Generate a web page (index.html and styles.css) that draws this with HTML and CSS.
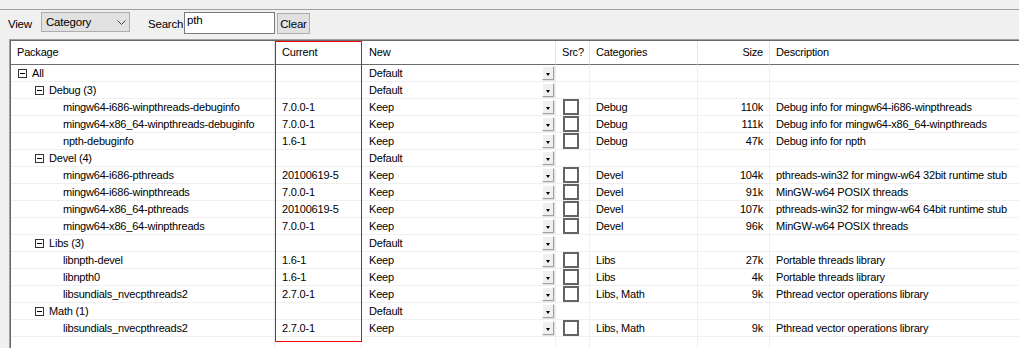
FILE: index.html
```html
<!DOCTYPE html>
<html lang="en">
<head>
    <meta charset="UTF-8">
    <title>Select Packages</title>
    <link rel="stylesheet" href="styles.css">
</head>
<body>

<div class="top-strip"></div>

<div class="toolbar">
    <span class="lbl view-lbl">View</span>
    <div class="select">
        <span>Category</span>
        <svg class="chevron" width="9" height="5" viewBox="0 0 9 5"><path d="M0.5 0.5 L4.5 4.5 L8.5 0.5" fill="none" stroke="#444" stroke-width="1"/></svg>
    </div>
    <span class="lbl search-lbl">Search</span>
    <input class="search" type="text" value="pth">
    <button class="btn">Clear</button>
</div>

<div class="list">
<div class="list-inner">

    <div class="row head">
        <div class="cell">Package</div>
        <div class="cell pad7">Current</div>
        <div class="cell pad7">New</div>
        <div class="cell">Src?</div>
        <div class="cell">Categories</div>
        <div class="cell size">Size</div>
        <div class="cell">Description</div>
    </div>

    <div class="row">
        <div class="cell tree lvl0"><span class="exp"></span>All</div>
        <div class="cell pad7"></div>
        <div class="cell pad7 pick"><span>Default</span><span class="drop"></span></div>
        <div class="cell"></div>
        <div class="cell"></div>
        <div class="cell size"></div>
        <div class="cell"></div>
    </div>

    <div class="row">
        <div class="cell tree lvl1"><span class="exp"></span>Debug (3)</div>
        <div class="cell pad7"></div>
        <div class="cell pad7 pick"><span>Default</span><span class="drop"></span></div>
        <div class="cell"></div>
        <div class="cell"></div>
        <div class="cell size"></div>
        <div class="cell"></div>
    </div>
    <div class="row">
        <div class="cell pkg">mingw64-i686-winpthreads-debuginfo</div>
        <div class="cell pad7">7.0.0-1</div>
        <div class="cell pad7 pick"><span>Keep</span><span class="drop"></span></div>
        <div class="cell src"><span class="check"></span></div>
        <div class="cell">Debug</div>
        <div class="cell size">110k</div>
        <div class="cell">Debug info for mingw64-i686-winpthreads</div>
    </div>
    <div class="row">
        <div class="cell pkg">mingw64-x86_64-winpthreads-debuginfo</div>
        <div class="cell pad7">7.0.0-1</div>
        <div class="cell pad7 pick"><span>Keep</span><span class="drop"></span></div>
        <div class="cell src"><span class="check"></span></div>
        <div class="cell">Debug</div>
        <div class="cell size">111k</div>
        <div class="cell">Debug info for mingw64-x86_64-winpthreads</div>
    </div>
    <div class="row">
        <div class="cell pkg">npth-debuginfo</div>
        <div class="cell pad7">1.6-1</div>
        <div class="cell pad7 pick"><span>Keep</span><span class="drop"></span></div>
        <div class="cell src"><span class="check"></span></div>
        <div class="cell">Debug</div>
        <div class="cell size">47k</div>
        <div class="cell">Debug info for npth</div>
    </div>

    <div class="row">
        <div class="cell tree lvl1"><span class="exp"></span>Devel (4)</div>
        <div class="cell pad7"></div>
        <div class="cell pad7 pick"><span>Default</span><span class="drop"></span></div>
        <div class="cell"></div>
        <div class="cell"></div>
        <div class="cell size"></div>
        <div class="cell"></div>
    </div>
    <div class="row">
        <div class="cell pkg">mingw64-i686-pthreads</div>
        <div class="cell pad7">20100619-5</div>
        <div class="cell pad7 pick"><span>Keep</span><span class="drop"></span></div>
        <div class="cell src"><span class="check"></span></div>
        <div class="cell">Devel</div>
        <div class="cell size">104k</div>
        <div class="cell">pthreads-win32 for mingw-w64 32bit runtime stub</div>
    </div>
    <div class="row">
        <div class="cell pkg">mingw64-i686-winpthreads</div>
        <div class="cell pad7">7.0.0-1</div>
        <div class="cell pad7 pick"><span>Keep</span><span class="drop"></span></div>
        <div class="cell src"><span class="check"></span></div>
        <div class="cell">Devel</div>
        <div class="cell size">91k</div>
        <div class="cell">MinGW-w64 POSIX threads</div>
    </div>
    <div class="row">
        <div class="cell pkg">mingw64-x86_64-pthreads</div>
        <div class="cell pad7">20100619-5</div>
        <div class="cell pad7 pick"><span>Keep</span><span class="drop"></span></div>
        <div class="cell src"><span class="check"></span></div>
        <div class="cell">Devel</div>
        <div class="cell size">107k</div>
        <div class="cell">pthreads-win32 for mingw-w64 64bit runtime stub</div>
    </div>
    <div class="row">
        <div class="cell pkg">mingw64-x86_64-winpthreads</div>
        <div class="cell pad7">7.0.0-1</div>
        <div class="cell pad7 pick"><span>Keep</span><span class="drop"></span></div>
        <div class="cell src"><span class="check"></span></div>
        <div class="cell">Devel</div>
        <div class="cell size">96k</div>
        <div class="cell">MinGW-w64 POSIX threads</div>
    </div>

    <div class="row">
        <div class="cell tree lvl1"><span class="exp"></span>Libs (3)</div>
        <div class="cell pad7"></div>
        <div class="cell pad7 pick"><span>Default</span><span class="drop"></span></div>
        <div class="cell"></div>
        <div class="cell"></div>
        <div class="cell size"></div>
        <div class="cell"></div>
    </div>
    <div class="row">
        <div class="cell pkg">libnpth-devel</div>
        <div class="cell pad7">1.6-1</div>
        <div class="cell pad7 pick"><span>Keep</span><span class="drop"></span></div>
        <div class="cell src"><span class="check"></span></div>
        <div class="cell">Libs</div>
        <div class="cell size">27k</div>
        <div class="cell">Portable threads library</div>
    </div>
    <div class="row">
        <div class="cell pkg">libnpth0</div>
        <div class="cell pad7">1.6-1</div>
        <div class="cell pad7 pick"><span>Keep</span><span class="drop"></span></div>
        <div class="cell src"><span class="check"></span></div>
        <div class="cell">Libs</div>
        <div class="cell size">4k</div>
        <div class="cell">Portable threads library</div>
    </div>
    <div class="row">
        <div class="cell pkg">libsundials_nvecpthreads2</div>
        <div class="cell pad7">2.7.0-1</div>
        <div class="cell pad7 pick"><span>Keep</span><span class="drop"></span></div>
        <div class="cell src"><span class="check"></span></div>
        <div class="cell">Libs, Math</div>
        <div class="cell size">9k</div>
        <div class="cell">Pthread vector operations library</div>
    </div>

    <div class="row">
        <div class="cell tree lvl1"><span class="exp"></span>Math (1)</div>
        <div class="cell pad7"></div>
        <div class="cell pad7 pick"><span>Default</span><span class="drop"></span></div>
        <div class="cell"></div>
        <div class="cell"></div>
        <div class="cell size"></div>
        <div class="cell"></div>
    </div>
    <div class="row">
        <div class="cell pkg">libsundials_nvecpthreads2</div>
        <div class="cell pad7">2.7.0-1</div>
        <div class="cell pad7 pick"><span>Keep</span><span class="drop"></span></div>
        <div class="cell src"><span class="check"></span></div>
        <div class="cell">Libs, Math</div>
        <div class="cell size">9k</div>
        <div class="cell">Pthread vector operations library</div>
    </div>

    <div class="row filler">
        <div class="cell"></div>
        <div class="cell"></div>
        <div class="cell"></div>
        <div class="cell"></div>
        <div class="cell"></div>
        <div class="cell"></div>
        <div class="cell"></div>
    </div>

    <div class="highlight"></div>
</div>
</div>

</body>
</html>
```

FILE: styles.css
```css
html, body {
    margin: 0;
    overflow: hidden;
}

body {
    font-family: "Liberation Sans", Arial, sans-serif;
    font-size: 11px;
    letter-spacing: -0.2px;
    color: #000;
    background-color: #f0f0f0;
    height: 348px;
}

.top-strip {
    height: 9px;
    border-bottom: 1px solid #a0a0a0;
}

/* toolbar */

.toolbar {
    display: flex;
    align-items: flex-start;
    height: 29px;
    padding-top: 2px;
    box-sizing: border-box;
    font-size: 11.5px;
}

.lbl {
    line-height: 22px;
    height: 22px;
    margin-top: 1px;
}

.view-lbl {
    width: 33px;
    padding-left: 8px;
}

.select {
    display: flex;
    align-items: center;
    justify-content: space-between;
    box-sizing: border-box;
    width: 89px;
    height: 20px;
    padding: 0 3px 0 4px;
    background-color: #e1e1e1;
    border: 1px solid #adadad;
}

.search-lbl {
    width: 36px;
    margin-left: 18px;
    white-space: nowrap;
}

.search {
    box-sizing: border-box;
    width: 91px;
    height: 22px;
    margin: 0;
    padding: 0 0 6px 2px;
    border: 1px solid #7a7a7a;
    background-color: #fff;
    font-family: inherit;
    font-size: 11.5px;
    letter-spacing: -0.2px;
    outline: none;
}

.btn {
    box-sizing: border-box;
    width: 33px;
    height: 21px;
    margin: 1px 0 0 2px;
    padding: 0;
    background-color: #e1e1e1;
    border: 1px solid #adadad;
    font-family: inherit;
    font-size: 11.5px;
    letter-spacing: -0.2px;
    color: #000;
}

/* package list */

.list {
    width: 1100px;
    margin-left: 9px;
    border-top: 1px solid #a0a0a0;
    border-left: 1px solid #a0a0a0;
}

.list-inner {
    position: relative;
    background-color: #fff;
    border-top: 1px solid #696969;
    border-left: 1px solid #696969;
}

.row {
    display: grid;
    grid-template-columns: 264px 87px 194px 34px 108px 72px 340px;
    height: 17px;
}

.cell {
    box-sizing: border-box;
    height: 17px;
    line-height: 16px;
    padding-left: 6px;
    border-right: 1px solid #f0f0f0;
    border-bottom: 1px solid #f0f0f0;
    white-space: nowrap;
    overflow: hidden;
}

.head {
    height: 24px;
}

.head .cell {
    height: 24px;
    line-height: 23px;
    border-right-color: #e5e5e5;
    border-bottom: 1px solid #6d6d6d;
}

.pad7 {
    padding-left: 7px;
}

.size {
    text-align: right;
    padding-left: 0;
    padding-right: 6px;
}

.pkg {
    padding-left: 52px;
}

/* tree expanders */

.tree {
    display: flex;
    align-items: center;
}

.lvl0 {
    padding-left: 7px;
}

.lvl1 {
    padding-left: 24px;
}

.exp {
    position: relative;
    box-sizing: border-box;
    width: 9px;
    height: 9px;
    margin-right: 5px;
    border: 1px solid #333;
}

.exp::after {
    content: "";
    position: absolute;
    left: 1px;
    top: 3px;
    width: 5px;
    height: 1px;
    background-color: #000;
}

/* "New" column combo */

.pick {
    display: flex;
    justify-content: space-between;
    padding-right: 1px;
}

.drop {
    position: relative;
    box-sizing: border-box;
    width: 12px;
    height: 14px;
    margin-top: 1px;
    background-color: #f0f0f0;
    border-top: 1px solid #fff;
    border-left: 1px solid #fff;
    border-right: 1px solid #a0a0a0;
    border-bottom: 1px solid #a0a0a0;
    box-shadow: 1px 1px 0 #e3e3e3;
}

.drop::after {
    content: "";
    position: absolute;
    left: 3px;
    top: 6px;
    border-left: 2.5px solid transparent;
    border-right: 2.5px solid transparent;
    border-top: 3px solid #000;
}

.src {
    padding-left: 7px;
}

.check {
    display: block;
    box-sizing: border-box;
    width: 16px;
    height: 16px;
    border: 2px solid #646464;
    background-color: #fff;
}

.filler,
.filler .cell {
    height: 30px;
    border-bottom: none;
}

.highlight {
    position: absolute;
    left: 264px;
    top: 0;
    width: 87px;
    height: 301px;
    box-sizing: border-box;
    border: 1px solid red;
    forced-color-adjust: none;
    pointer-events: none;
}
```
